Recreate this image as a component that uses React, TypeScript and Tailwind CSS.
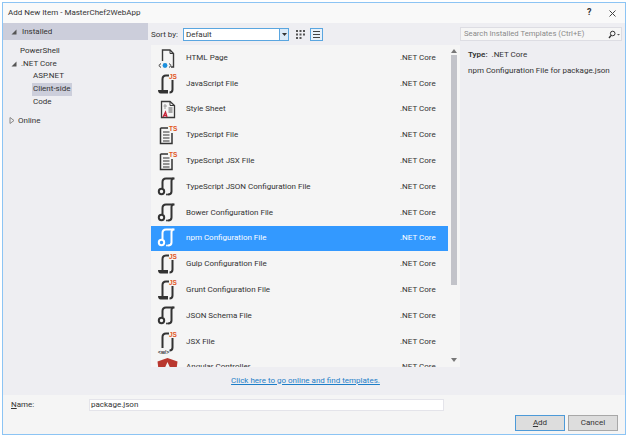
import React from "react";

const F = "font-['Roboto','Liberation_Sans',sans-serif]";

function Badge({ t, y }: { t: string; y: number }) {
  return (
    <text x="12" y={y} fontSize="6.5" fontWeight="700" fill="#e2571e" fontFamily="Liberation Sans, sans-serif">
      {t}
    </text>
  );
}

function Scroll({ c, ring, badge, tag }: { c: string; ring?: boolean; badge?: string; tag?: boolean }) {
  return (
    <svg width="22" height="24" viewBox="0 0 22 24" fill="none">
      {ring ? (
        <>
          <path d="M5.500 13V7C5.500 4.500 7 3.500 9 3.500H17.500" stroke={c} strokeWidth="2" />
          <path d="M16.500 3.500C15 3.500 14.500 4.500 14.500 6V16.500C14.500 18.500 13.500 19.500 11 19.500" stroke={c} strokeWidth="2" />
          <circle cx="4.500" cy="16.500" r="2.700" stroke={c} strokeWidth="2" />
          <circle cx="10" cy="19.500" r="1" fill={c} />
        </>
      ) : (
        <>
          <path d="M5.500 18V7C5.500 4.500 7 3.500 9 3.500H12" stroke={c} strokeWidth="2" />
          <path d="M15.500 8V17.500C15.500 19.500 14.500 20.500 12.500 20.500" stroke={c} strokeWidth="2" />
          {tag ? (
            <text x="1" y="23.500" fontSize="5" fontWeight="700" fill={c} fontFamily="Liberation Sans, sans-serif">{"<w/>"}</text>
          ) : (
            <path d="M1 18H11V21.500H3.500C2 21.500 1 20 1 18Z" fill={c} />
          )}
        </>
      )}
      {badge && <Badge t={badge} y={7} />}
    </svg>
  );
}

function Html() {
  return (
    <svg width="22" height="24" viewBox="0 0 22 24" fill="none">
      <path d="M5.500 15V4H13L16.500 7.500V21H14" stroke="#3a3a3a" strokeWidth="1.400" />
      <path d="M13 4V7.500H16.500" stroke="#3a3a3a" strokeWidth="1" />
      <path d="M4 17.500L1.800 19.500L4 21.500M12 17.500L14.200 19.500L12 21.500" stroke="#3a3a3a" strokeWidth="1" />
      <circle cx="8" cy="19.500" r="2.400" fill="#1c8fdc" />
    </svg>
  );
}

function Css() {
  return (
    <svg width="22" height="24" viewBox="0 0 22 24" fill="none">
      <path d="M4.500 20.500V4.500H13L17.500 8.500V20.500H4.500Z" stroke="#3a3a3a" strokeWidth="1.300" />
      <path d="M13 4.500V8.500H17.500" stroke="#3a3a3a" strokeWidth="1" />
      <rect x="11.500" y="10" width="4" height="6" fill="#a8a8a8" />
      <path d="M8 7V12M6.500 9H10" stroke="#9a9a9a" strokeWidth="1" />
      <path d="M6 20L8.500 15L10 20M6.800 18.500H9.700" stroke="#c8243a" strokeWidth="1.300" />
    </svg>
  );
}

function Ts() {
  return (
    <svg width="22" height="24" viewBox="0 0 22 24" fill="none">
      <path d="M3.500 5H11M15 10V20.500H3.500V5" stroke="#333" strokeWidth="1.500" />
      <path d="M6 9H12.500M6 12H12.500M6 15H12.500M6 18H12.500" stroke="#333" strokeWidth="1.200" />
      <Badge t="TS" y={7.500} />
    </svg>
  );
}

function Angular() {
  return (
    <svg width="22" height="24" viewBox="0 0 22 24">
      <path d="M10.500 3L20.500 6.500L19 19L10.500 24L2 19L0.500 6.500Z" fill="#b9372f" />
      <path d="M10.500 7L15.500 18H13.500L12.500 15.500H8.500L7.500 18H5.500Z" fill="#f3f3f3" />
    </svg>
  );
}

const D = "#333";
const rows: { name: string; icon: React.ReactNode; sel?: boolean }[] = [
  { name: "HTML Page", icon: <Html /> },
  { name: "JavaScript File", icon: <Scroll c={D} badge="JS" /> },
  { name: "Style Sheet", icon: <Css /> },
  { name: "TypeScript File", icon: <Ts /> },
  { name: "TypeScript JSX File", icon: <Ts /> },
  { name: "TypeScript JSON Configuration File", icon: <Scroll c={D} ring /> },
  { name: "Bower Configuration File", icon: <Scroll c={D} ring /> },
  { name: "npm Configuration File", icon: <Scroll c="#ffffff" ring />, sel: true },
  { name: "Gulp Configuration File", icon: <Scroll c={D} badge="JS" /> },
  { name: "Grunt Configuration File", icon: <Scroll c={D} badge="JS" /> },
  { name: "JSON Schema File", icon: <Scroll c={D} ring /> },
  { name: "JSX File", icon: <Scroll c={D} badge="JS" tag /> },
  { name: "Angular Controller", icon: <Angular /> },
];

function Tri({ open }: { open?: boolean }) {
  return open ? (
    <svg width="6" height="6" viewBox="0 0 6 6"><path d="M5.500 0.500V5.500H0.500Z" fill="#555" /></svg>
  ) : (
    <svg width="6" height="7" viewBox="0 0 6 7"><path d="M1 0.500L5 3.500L1 6.500Z" fill="none" stroke="#888" /></svg>
  );
}

export default function App() {
  return (
    <div className={`w-[628px] h-[437px] bg-white p-[2px] text-[8px] text-[#333] ${F}`}>
      <div className="w-[624px] h-[433px] border border-[#8cc4f4] flex flex-col bg-[#eeeef2]">
        <div className="h-[20px] shrink-0 bg-[#f9f9f9] flex items-center pl-[5px] pr-[9px]">
          <span className="flex-1">Add New Item - MasterChef2WebApp</span>
          <span className="w-[22px] font-bold text-[9px]">?</span>
          <svg width="7" height="7" viewBox="0 0 7 7"><path d="M0.500 0.500L6.500 6.500M6.500 0.500L0.500 6.500" stroke="#444" /></svg>
        </div>
        <div className="flex-1 flex min-h-0">
          <div className="w-[145px] shrink-0">
            <div className="h-[17px] bg-[#ccceDB] flex items-center gap-[5px] pl-[8px] pt-[1px]">
              <Tri open />
              <span>Installed</span>
            </div>
            <div className="pt-[5px] leading-[12.700px]">
              <div className="pl-[17px]">PowerShell</div>
              <div className="pl-[8px] flex items-center gap-[4px]"><Tri open /><span>.NET Core</span></div>
              <div className="pl-[30px]">ASP.NET</div>
              <div className="pl-[29px]"><span className="bg-[#ccceDB] pl-[1px] inline-block w-[40px] whitespace-nowrap">Client-side</span></div>
              <div className="pl-[30px]">Code</div>
              <div className="pl-[6px] mt-[6px] flex items-center gap-[3px]"><Tri /><span>Online</span></div>
            </div>
          </div>
          <div className="flex-1 min-w-0 flex flex-col">
            <div className="flex">
              <div className="w-[309px] ml-[3px] shrink-0">
                <div className="h-[22px] flex items-center pt-[1px]">
                  <span className="w-[32px] shrink-0">Sort by:</span>
                  <div className="w-[106px] h-[13px] border border-[#5aa6e0] bg-white flex items-center pl-[2px]">
                    <span className="flex-1">Default</span>
                    <div className="w-[9px] h-full bg-[#dbeaf7] border-l border-[#5aa6e0] flex items-center justify-center">
                      <svg width="5" height="3" viewBox="0 0 5 3"><path d="M0 0H5L2.500 3Z" fill="#333" /></svg>
                    </div>
                  </div>
                  <svg className="ml-[6px]" width="11" height="11" viewBox="0 0 11 11" fill="#555">
                    <path d="M1 1H3V3H1ZM4.500 1H6.500V3H4.500ZM8 1H10V3H8ZM1 4.500H3V6.500H1ZM4.500 4.500H6.500V6.500H4.500ZM8 4.500H10V6.500H8ZM1 8H3V10H1ZM4.500 8H6.500V10H4.500Z" />
                  </svg>
                  <div className="ml-[4px] w-[13px] h-[13px] border border-[#5aa6e0] bg-[#e8f1fa] flex items-center justify-center">
                    <svg width="9" height="9" viewBox="0 0 9 9"><path d="M1 1.500H8M1 4.500H8M1 7.500H8" stroke="#444" strokeWidth="1.200" /></svg>
                  </div>
                </div>
                <div className="h-[322px] overflow-hidden bg-[#f5f5f5] flex">
                  <div className="w-[297px] shrink-0">
                    {rows.map((r) => (
                      <div key={r.name} className={`h-[25.800px] flex items-center pl-[6px] ${r.sel ? "bg-[#3399ff] text-white" : ""}`}>
                        <div className="w-[29px] shrink-0 flex items-center">{r.icon}</div>
                        <span className="flex-1">{r.name}</span>
                        <span className="w-[48px] whitespace-nowrap">.NET Core</span>
                      </div>
                    ))}
                  </div>
                  <div className="w-[12px] flex flex-col items-center">
                    <svg className="mt-[4px]" width="6" height="4" viewBox="0 0 6 4"><path d="M0 4L3 0L6 4Z" fill="#777" /></svg>
                    <div className="w-[6px] h-[230px] mt-[2px] bg-[#c2c3c9]" />
                    <div className="flex-1" />
                    <svg className="mb-[5px]" width="6" height="4" viewBox="0 0 6 4"><path d="M0 0L3 4L6 0Z" fill="#777" /></svg>
                  </div>
                </div>
              </div>
              <div className="flex-1 pr-[3px]">
                <div className="h-[22px] pt-[4px]">
                  <div className="h-[14px] border border-[#dddde3] bg-[#f6f6f6] flex items-center pl-[3px] pr-[1px] text-[7.700px] text-[#8a8a8a]">
                    <span className="flex-1">Search Installed Templates (Ctrl+E)</span>
                    <svg width="12" height="9" viewBox="0 0 12 9" fill="none">
                      <circle cx="4.700" cy="3.500" r="2.300" stroke="#333" />
                      <path d="M3 5.500L1 8" stroke="#333" strokeWidth="1.300" />
                      <path d="M9 4H12L10.500 5.500Z" fill="#555" />
                    </svg>
                  </div>
                </div>
                <div className="pt-[4px] pl-[8px] leading-[12px]">
                  <div><span className="font-semibold">Type:</span>&nbsp; .NET Core</div>
                  <div className="mt-[4px]">npm Configuration File for package.json</div>
                </div>
              </div>
            </div>
            <div className="h-[27px] w-[309px] ml-[3px] flex items-center justify-center text-[#1e7ec8] underline">
              Click here to go online and find templates.
            </div>
          </div>
        </div>
        <div className="h-[39px] shrink-0 bg-[#f5f5f5] flex flex-col">
          <div className="flex items-center h-[15px] mt-[2px]">
            <span className="w-[86px] pl-[8px] shrink-0"><u>N</u>ame:</span>
            <div className="w-[355px] h-[12px] border border-[#e4e4ea] bg-white flex items-center pl-[1px]">package.json</div>
          </div>
          <div className="flex justify-end gap-[3px] pr-[7px] mt-[3px]">
            <div className="w-[50px] h-[16px] border border-[#4d9ad8] bg-[#dddddd] flex items-center justify-center"><span><u>A</u>dd</span></div>
            <div className="w-[50px] h-[16px] border border-[#a8a8a8] bg-[#dddddd] flex items-center justify-center">Cancel</div>
          </div>
        </div>
      </div>
    </div>
  );
}
